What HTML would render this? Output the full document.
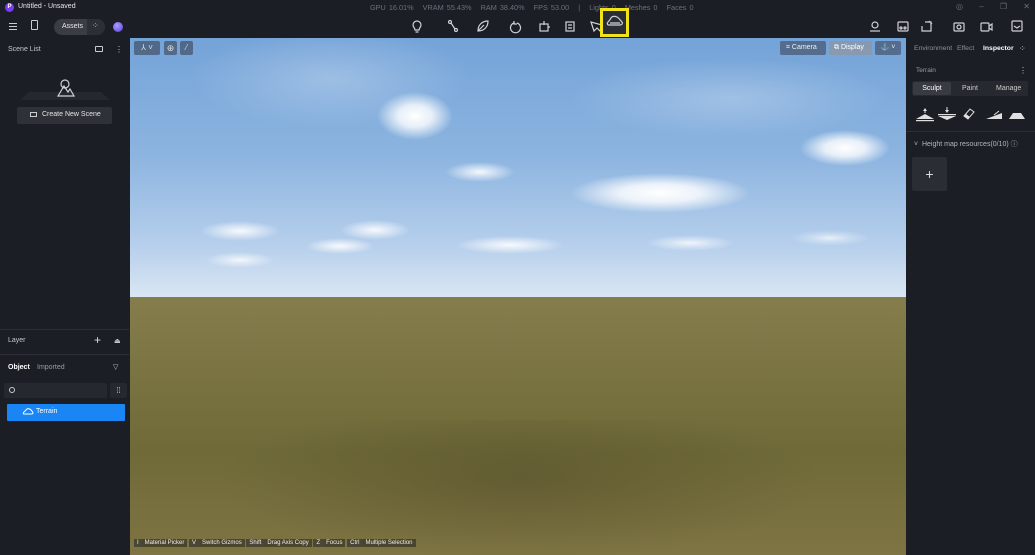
<!DOCTYPE html>
<html><head><style>
*{margin:0;padding:0;box-sizing:border-box}
body{width:1035px;height:555px;background:#1b1e25;font-family:"Liberation Sans",sans-serif;color:#d6d8dc;font-size:7px;position:relative;overflow:hidden}
.a{position:absolute}
.g{color:#6c7079}
.ic{stroke:#cfd2d6;fill:none;stroke-width:1.2}
</style></head><body>
<div class="a" style="left:5px;top:3px;width:9px;height:9px;border-radius:50%;background:#7b3bf0"></div>
<div class="a" style="left:7.5px;top:4px;color:#fff;font-size:6px;font-weight:bold">P</div>
<div class="a" style="left:18px;top:3px;font-size:7px;color:#e6e6e6">Untitled - Unsaved</div>
<div class="a g" style="left:370px;top:3px;font-size:7.3px;word-spacing:1px">GPU 16.01% &nbsp; VRAM 55.43% &nbsp; RAM 38.40% &nbsp; FPS 53.00 &nbsp; | &nbsp; Lights 0 &nbsp; Meshes 0 &nbsp; Faces 0</div>
<div class="a g" style="left:956px;top:2px;font-size:8px;word-spacing:14px">◎ – ❐ ✕</div>
<div class="a" style="left:9px;top:23px;width:8px;height:1px;background:#ccc;box-shadow:0 3px #ccc,0 6px #ccc"></div>
<div class="a" style="left:31px;top:20px;width:7px;height:10px;border:1.2px solid #ccc;border-radius:1px"></div>
<div class="a" style="left:54px;top:19px;width:51px;height:16px;border-radius:8px;background:#3a3d44"></div>
<div class="a" style="left:87px;top:19px;width:18px;height:16px;border-radius:0 8px 8px 0;background:#2c2f35"></div>
<div class="a" style="left:62px;top:23px;color:#e8e8e8;font-size:7px">Assets</div>
<div class="a" style="left:92px;top:21px;color:#ccc;font-size:8px">⁘</div>
<div class="a" style="left:113px;top:22px;width:10px;height:10px;border-radius:50%;background:radial-gradient(circle at 40% 35%,#a8a0ff,#5a3ad8)"></div>
<svg class="a" style="left:410px;top:18px" width="220" height="16" viewBox="0 0 220 16">
<g class="ic">
<path d="M7 3a4 4 0 0 1 4 4c0 2-2 3-2 5h-4c0-2-2-3-2-5a4 4 0 0 1 4-4zM5.5 14h3"/>
<circle cx="40" cy="4" r="1.5"/><circle cx="46" cy="12" r="1.5"/><path d="M41 5l4 6"/>
<path d="M68 13c0-6 4-10 10-10 0 6-4 10-10 10zM68 13l6-6"/>
<path d="M104 5a5 5 0 1 0 3 0M104 3v3h3"/>
<rect x="130" y="6" width="8" height="7"/><path d="M134 3v4M138 9h2"/>
<rect x="156" y="4" width="8" height="9"/><path d="M158 7h4M158 10h4"/>
<path d="M181 4l3 9 3-3 3 3 2-6z"/>
</g></svg>
<div class="a" style="left:600px;top:8px;width:29px;height:29px;border:3px solid #f2e21a;background:#2a2d33"></div>
<svg class="a" style="left:606px;top:15px" width="18" height="14"><path class="ic" d="M3 10c-2 0-2-2-1-3s2-2 3-4c1-2 4-2 6-1s3 3 5 5c1 1 0 3-2 3z M4 8h10"/></svg>
<div class="a" style="left:599px;top:46px;width:33px;height:12px;background:#050608;color:#fff;font-size:6.5px;text-align:center;line-height:12px">Terrain</div>
<div class="a" style="left:613px;top:42px;border:3px solid transparent;border-bottom-color:#ddd;border-top:0"></div>
<svg class="a" style="left:866px;top:18px" width="165" height="16"><g class="ic">
<circle cx="9" cy="7" r="3"/><path d="M4 13h10"/>
<rect x="32" y="4" width="10" height="9" rx="1"/><circle cx="35" cy="10" r="1"/><circle cx="39" cy="10" r="1"/>
<path d="M59 4h6v9h-9v-5M63 3l3 3"/>
<rect x="88" y="5" width="10" height="8" rx="1"/><circle cx="93" cy="9" r="2"/>
<rect x="115" y="5" width="8" height="8" rx="1"/><path d="M123 8l3-2v6l-3-2"/>
<rect x="146" y="3" width="10" height="10" rx="1"/><path d="M148 8l3 2 3-2"/>
</g></svg>
<div class="a" style="left:8px;top:46px;font-size:7px;color:#c6c8cc">Scene List</div>
<div class="a" style="left:95px;top:46px;width:8px;height:6px;border:1px solid #ccc;border-radius:1px"></div>
<div class="a" style="left:115px;top:45px;color:#ccc;font-size:8px">⋮</div>
<div class="a" style="left:20px;top:92px;width:90px;height:8px;background:#25282e;clip-path:polygon(10% 0,90% 0,100% 100%,0 100%)"></div>
<svg class="a" style="left:56px;top:78px" width="20" height="20"><g class="ic" stroke="#999"><circle cx="9" cy="6" r="4"/><path d="M2 18l6-10 4 6 2-3 4 7z"/></g></svg>
<div class="a" style="left:17px;top:107px;width:95px;height:17px;background:#2e3137;border-radius:2px"></div>
<div class="a" style="left:30px;top:112px;width:7px;height:5px;border:1px solid #ccc"></div>
<div class="a" style="left:42px;top:111px;color:#e5e5e5;font-size:7px">Create New Scene</div>
<div class="a" style="left:0;top:329px;width:129px;height:1px;background:#2c2f35"></div>
<div class="a" style="left:8px;top:337px;font-size:7px;color:#c6c8cc">Layer</div>
<div class="a" style="left:94px;top:333px;font-size:12px;color:#ddd">+</div>
<div class="a" style="left:114px;top:337px;font-size:7px;color:#ccc">⏏</div>
<div class="a" style="left:0;top:354px;width:129px;height:1px;background:#2c2f35"></div>
<div class="a" style="left:8px;top:364px;font-size:7px;color:#fff;font-weight:bold">Object</div>
<div class="a" style="left:37px;top:364px;font-size:7px;color:#9a9da3">Imported</div>
<div class="a" style="left:113px;top:363px;font-size:7px;color:#ccc">▽</div>
<div class="a" style="left:4px;top:383px;width:103px;height:15px;background:#25282e;border-radius:2px"></div>
<div class="a" style="left:9px;top:387px;width:6px;height:6px;border:1.2px solid #ccc;border-radius:50%"></div>
<div class="a" style="left:110px;top:383px;width:17px;height:15px;background:#25282e;border-radius:2px;color:#ccc;font-size:8px;text-align:center;line-height:15px">⁞⁞</div>
<div class="a" style="left:7px;top:404px;width:118px;height:17px;background:#1a86f5;border-radius:1px"></div>
<svg class="a" style="left:22px;top:407px" width="12" height="10"><path d="M2 7c-1 0-1-1 0-2s2-2 3-3 3 0 4 1 2 2 2 3-1 1-2 1z" stroke="#fff" fill="none"/></svg>
<div class="a" style="left:36px;top:408px;color:#fff;font-size:7px">Terrain</div>
<div class="a" style="left:130px;top:38px;width:776px;height:259px;background:linear-gradient(#74a3d8 0%,#8cb4e0 45%,#b6cfec 80%,#dae6f2 100%)"></div>
<div class="a" style="left:130px;top:38px;width:776px;height:259px;background:
radial-gradient(ellipse 38px 24px at 285px 78px,#fff 0,rgba(255,255,255,.8) 45%,transparent),
radial-gradient(ellipse 90px 20px at 530px 155px,#fff 0,rgba(255,255,255,.8) 45%,transparent),
radial-gradient(ellipse 45px 18px at 715px 110px,#fff 0,rgba(255,255,255,.8) 45%,transparent),
radial-gradient(ellipse 35px 10px at 350px 134px,rgba(255,255,255,.9) 0,rgba(255,255,255,.5) 45%,transparent),
radial-gradient(ellipse 40px 10px at 110px 193px,rgba(255,255,255,.9) 0,rgba(255,255,255,.5) 45%,transparent),
radial-gradient(ellipse 35px 10px at 245px 192px,rgba(255,255,255,.9) 0,rgba(255,255,255,.5) 45%,transparent),
radial-gradient(ellipse 35px 8px at 210px 208px,rgba(255,255,255,.9) 0,rgba(255,255,255,.5) 45%,transparent),
radial-gradient(ellipse 55px 9px at 380px 207px,rgba(255,255,255,.9) 0,rgba(255,255,255,.5) 45%,transparent),
radial-gradient(ellipse 45px 8px at 560px 205px,rgba(255,255,255,.8) 0,rgba(255,255,255,.4) 45%,transparent),
radial-gradient(ellipse 35px 8px at 110px 222px,rgba(255,255,255,.8) 0,rgba(255,255,255,.4) 45%,transparent),
radial-gradient(ellipse 40px 8px at 700px 200px,rgba(255,255,255,.7) 0,rgba(255,255,255,.3) 45%,transparent),
radial-gradient(ellipse 140px 50px at 200px 40px,rgba(255,255,255,.25),transparent),
radial-gradient(ellipse 160px 40px at 600px 60px,rgba(255,255,255,.25),transparent)"></div>
<div class="a" style="left:130px;top:297px;width:776px;height:258px;background:linear-gradient(#857d4c 0%,#7a7342 30%,#6f6a38 60%,#7f7443 100%)"></div>
<div class="a" style="left:130px;top:420px;width:776px;height:135px;background:radial-gradient(ellipse 300px 80px at 390px 60px,rgba(60,55,30,.3),transparent)"></div>
<div class="a" style="left:134px;top:41px;width:26px;height:14px;background:rgba(70,85,110,.75);border-radius:2px;color:#ddd;font-size:8px;text-align:center;line-height:14px">⅄ ˅</div>
<div class="a" style="left:164px;top:41px;width:13px;height:14px;background:rgba(70,85,110,.75);border-radius:2px;color:#ddd;font-size:9px;text-align:center;line-height:14px">⊕</div>
<div class="a" style="left:180px;top:41px;width:13px;height:14px;background:rgba(70,85,110,.75);border-radius:2px;color:#ddd;font-size:8px;text-align:center;line-height:14px">⁄</div>
<div class="a" style="left:780px;top:41px;width:46px;height:14px;background:rgba(70,85,110,.7);border-radius:2px;color:#eee;font-size:7px;line-height:14px;padding-left:6px">⌗ Camera</div>
<div class="a" style="left:829px;top:41px;width:43px;height:14px;background:rgba(140,150,165,.8);border-radius:2px;color:#fff;font-size:7px;line-height:14px;padding-left:5px">⧉ Display</div>
<div class="a" style="left:875px;top:41px;width:26px;height:14px;background:rgba(70,85,110,.7);border-radius:2px;color:#eee;font-size:7px;line-height:14px;text-align:center">⚓ ˅</div>
<div class="a" style="left:134px;top:540px;font-size:6px;color:#eee;white-space:nowrap">
<span style="background:rgba(60,60,50,.8);padding:1px 3px">I</span><span style="background:rgba(40,40,30,.6);padding:1px 3px">Material Picker</span>
<span style="background:rgba(60,60,50,.8);padding:1px 3px">V</span><span style="background:rgba(40,40,30,.6);padding:1px 3px">Switch Gizmos</span>
<span style="background:rgba(60,60,50,.8);padding:1px 3px">Shift</span><span style="background:rgba(40,40,30,.6);padding:1px 3px">Drag Axis Copy</span>
<span style="background:rgba(60,60,50,.8);padding:1px 3px">Z</span><span style="background:rgba(40,40,30,.6);padding:1px 3px">Focus</span>
<span style="background:rgba(60,60,50,.8);padding:1px 3px">Ctrl</span><span style="background:rgba(40,40,30,.6);padding:1px 3px">Multiple Selection</span></div>
<div class="a" style="left:914px;top:45px;font-size:6.8px;color:#8e9197">Environment</div>
<div class="a" style="left:957px;top:45px;font-size:6.8px;color:#8e9197">Effect</div>
<div class="a" style="left:983px;top:45px;font-size:6.8px;color:#fff;font-weight:bold">Inspector</div>
<div class="a" style="left:1019px;top:44px;font-size:8px;color:#ccc">⁘</div>
<div class="a" style="left:916px;top:67px;font-size:6.5px;color:#9a9da3">Terrain</div>
<div class="a" style="left:1019px;top:66px;font-size:8px;color:#ccc">⋮</div>
<div class="a" style="left:912px;top:81px;width:116px;height:15px;background:#26292f;border-radius:2px"></div>
<div class="a" style="left:913px;top:82px;width:38px;height:13px;background:#383b42;border-radius:2px;color:#fff;font-size:7px;text-align:center;line-height:13px">Sculpt</div>
<div class="a" style="left:962px;top:85px;font-size:7px;color:#ccc">Paint</div>
<div class="a" style="left:996px;top:85px;font-size:7px;color:#ccc">Manage</div>
<svg class="a" style="left:914px;top:105px" width="114" height="18"><g fill="#e0e0e0">
<path d="M2 14l9-5 9 5z"/><rect x="2" y="15" width="18" height="1.2"/><path d="M11 3l-2 3h4z"/><rect x="10.5" y="5" width="1" height="3"/>
<path d="M24 11h18l-9 4z"/><rect x="24" y="9" width="18" height="1.2"/><path d="M33 8l-2-3h4z"/><rect x="32.5" y="2" width="1" height="4"/>
<path d="M50 11l6-7 4 3-6 7z" fill="none" stroke="#e0e0e0"/><path d="M50 11l4 3 2-2-4-3z"/>
<path d="M72 14l16-6v6z"/><path d="M80 10l5-4" stroke="#e0e0e0"/>
<path d="M95 14l4-6h8l4 6z"/>
</g></svg>
<div class="a" style="left:906px;top:131px;width:129px;height:1px;background:#2c2f35"></div>
<div class="a" style="left:914px;top:139px;font-size:7px;color:#b4b7bc">˅ &nbsp;Height map resources(0/10) ⓘ</div>
<div class="a" style="left:912px;top:157px;width:35px;height:34px;background:#2a2d33;border-radius:2px;color:#ddd;font-size:14px;text-align:center;line-height:34px">+</div>
</body></html>
